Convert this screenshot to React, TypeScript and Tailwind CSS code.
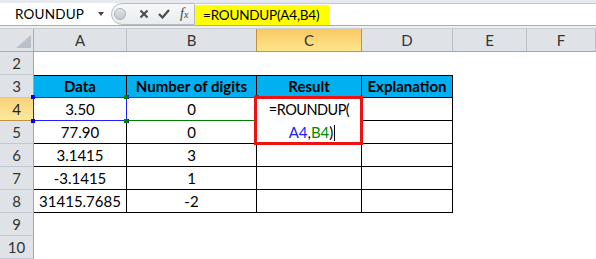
import React from 'react';

const cols = ['A', 'B', 'C', 'D', 'E', 'F'];

const rows: { n: number; cells: string[] }[] = [
  { n: 6, cells: ['3.1415', '3'] },
  { n: 7, cells: ['-3.1415', '1'] },
  { n: 8, cells: ['31415.7685', '-2'] },
];

function RowHead({ n, active }: { n: number; active?: boolean }) {
  return (
    <div
      className={
        active
          ? 'flex items-center justify-center bg-gradient-to-b from-[#f9d27a] to-[#fde99b] border-r border-b border-[#c4913f] text-[#222]'
          : 'flex items-center justify-center bg-[#dfe3e8] border-r border-b border-r-[#9ea7b1] border-b-[#c3c9d0] text-[#333]'
      }
    >
      {n}
    </div>
  );
}

function Corners({ color }: { color: string }) {
  return (
    <>
      <span className={`absolute -left-[3px] -top-[3px] w-[4px] h-[4px] ${color}`} />
      <span className={`absolute -right-[3px] -top-[3px] w-[4px] h-[4px] ${color}`} />
      <span className={`absolute -left-[3px] -bottom-[3px] w-[4px] h-[4px] ${color}`} />
      <span className={`absolute -right-[3px] -bottom-[3px] w-[4px] h-[4px] ${color}`} />
    </>
  );
}

export default function App() {
  const cell = 'flex items-center justify-center border-r border-b border-black';
  const blank = 'bg-white';

  return (
    <div
      className="w-[596px] h-[259px] overflow-hidden bg-white text-[15px] text-black"
      style={{ fontFamily: 'Lato, "Liberation Sans", sans-serif' }}
    >
      {/* formula bar */}
      <div className="h-[3px] bg-[#e6e9ed]" />
      <div className="h-[23px] flex border-b border-[#a9adb3]">
        <div className="w-[111px] bg-white flex items-center pl-[15px] pr-[7px] text-[13.5px]">
          <span className="flex-1 tracking-[0.2px]">ROUNDUP</span>
          <span className="w-0 h-0 border-l-[3px] border-r-[3px] border-t-[4px] border-l-transparent border-r-transparent border-t-[#444]" />
        </div>
        <div className="w-[84px] flex items-center bg-gradient-to-b from-[#f7f8f9] to-[#e9ecef] border border-[#b7bcc2] rounded-l-full">
          <span className="ml-[2px] w-[12px] h-[12px] rounded-full bg-gradient-to-b from-[#e3e6ea] to-[#c1c7ce] border border-[#a9b0b8]" />
          <svg className="ml-[13px]" width="10" height="10" viewBox="0 0 10 10">
            <path d="M1.5 1.5 L8.5 8.5 M8.5 1.5 L1.5 8.5" stroke="#4a4a4a" strokeWidth="2" />
          </svg>
          <svg className="ml-[9px]" width="12" height="10" viewBox="0 0 12 10">
            <path d="M1 5 L4.5 8.5 L11 1" stroke="#4a4a4a" strokeWidth="2.2" fill="none" />
          </svg>
          <span
            className="ml-[10px] italic text-[#444] text-[14px] leading-none"
            style={{ fontFamily: '"Liberation Serif", serif' }}
          >
            f<span className="text-[10px]">x</span>
          </span>
        </div>
        <div className="flex-1 bg-white flex items-end border-t border-[#c6cacf]">
          <div className="w-[134px] h-[20px] bg-[#ffff00] flex items-center pl-[8px] text-[13.5px] tracking-[-0.2px]">
            =ROUNDUP(A4,B4)
          </div>
        </div>
      </div>
      <div className="h-[3px] bg-[#eef0f2] border-b border-[#c9cdd2]" />

      {/* sheet */}
      <div className="grid grid-cols-[34px_93px_130px_105px_91px_74px_69px] grid-rows-[23px_repeat(9,23px)]">
        {/* column headers */}
        <div className="relative bg-[#dfe3e8] border-r border-b border-[#a7afb8]">
          <svg className="absolute left-[16px] top-[6px]" width="15" height="13" viewBox="0 0 15 13">
            <path d="M15 0 L15 13 L0 13 Z" fill="#b9c0c8" />
          </svg>
        </div>
        {cols.map((c) =>
          c === 'C' ? (
            <div
              key={c}
              className="flex items-center justify-center bg-gradient-to-b from-[#f8c95f] to-[#fde58e] border-l border-r border-b border-[#c4913f] -ml-px text-[#333]"
            >
              {c}
            </div>
          ) : (
            <div
              key={c}
              className="flex items-center justify-center bg-[#dfe3e8] border-r border-b border-r-[#b9c0c8] border-b-[#9ea7b1] text-[#333]"
            >
              {c}
            </div>
          )
        )}

        {/* row 2 */}
        <RowHead n={2} />
        {cols.map((c) => (
          <div key={c} className={blank} />
        ))}

        {/* row 3 header */}
        <RowHead n={3} />
        {['Data', 'Number of digits', 'Result', 'Explanation'].map((t) => (
          <div key={t} className={`${cell} border-t bg-[#00b0f0] font-bold`}>
            {t}
          </div>
        ))}
        <div className={blank} />
        <div className={blank} />

        {/* row 4 */}
        <RowHead n={4} active />
        <div className={`${cell} relative`}>
          3.50
          <div className="absolute z-10 -top-px -left-px -right-px -bottom-px border border-[#1f1fff]">
            <Corners color="bg-[#0000ff]" />
          </div>
        </div>
        <div className={`${cell} relative`}>
          0
          <div className="absolute z-10 -top-px left-0 -right-px -bottom-px border border-l-0 border-[#008000]">
            <Corners color="bg-[#008000]" />
          </div>
        </div>
        <div className="relative z-20 row-span-2 flex flex-col bg-white border-r border-b border-black leading-[23px]">
          <div className="text-center text-[14.5px] tracking-[-0.5px]">=ROUNDUP(</div>
          <div className="flex justify-center items-center pl-[6px]">
            <span className="text-[#2020ff]">A4</span>
            <span>,</span>
            <span className="text-[#008a00]">B4</span>
            <span>)</span>
            <span className="inline-block w-px h-[16px] bg-black ml-[1px]" />
          </div>
          <div className="absolute -left-[3px] -top-[2px] -right-[2px] -bottom-[2px] border-[3px] border-[#ee1111]" />
        </div>
        <div className={cell} />
        <div className={blank} />
        <div className={blank} />

        {/* row 5 */}
        <RowHead n={5} />
        <div className={cell}>77.90</div>
        <div className={cell}>0</div>
        <div className={cell} />
        <div className={blank} />
        <div className={blank} />

        {/* rows 6-8 */}
        {rows.map((r) => (
          <React.Fragment key={r.n}>
            <RowHead n={r.n} />
            <div className={cell}>{r.cells[0]}</div>
            <div className={cell}>{r.cells[1]}</div>
            <div className={cell} />
            <div className={cell} />
            <div className={blank} />
            <div className={blank} />
          </React.Fragment>
        ))}

        {/* rows 9-10 */}
        {[9, 10].map((n) => (
          <React.Fragment key={n}>
            <RowHead n={n} />
            {cols.map((c) => (
              <div key={c} className={blank} />
            ))}
          </React.Fragment>
        ))}
      </div>
    </div>
  );
}
